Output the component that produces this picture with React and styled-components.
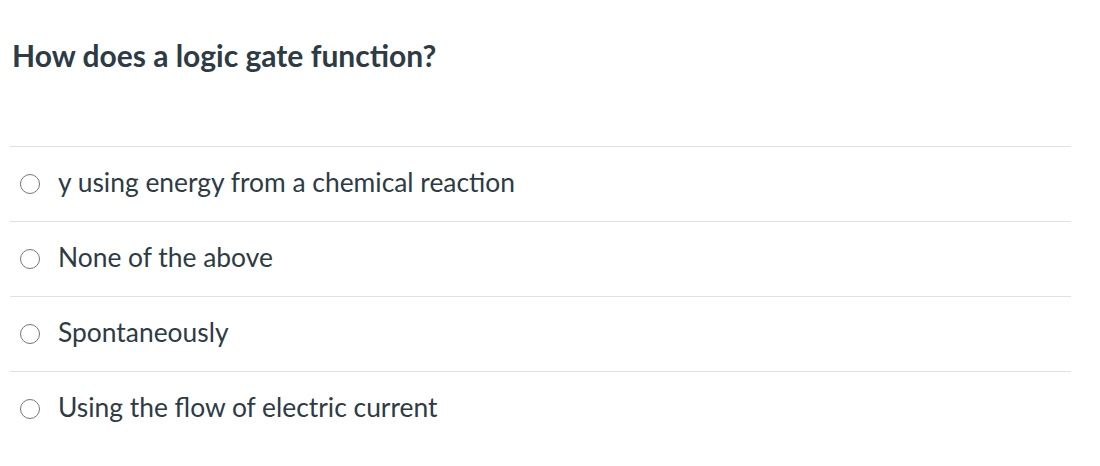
import React from 'react';
import styled, { createGlobalStyle } from 'styled-components';

const GlobalStyle = createGlobalStyle`
  body {
    margin: 0;
    background: #ffffff;
    font-family: Lato, "Open Sans", sans-serif;
  }
`;

const options = [
  'y using energy from a chemical reaction',
  'None of the above',
  'Spontaneously',
  'Using the flow of electric current',
];

export default function App() {
  return (
    <>
      <GlobalStyle />
      <Question>
        <Title>How does a logic gate function?</Title>
        <Answers>
          {options.map((text) => (
            <Answer key={text}>
              <Radio type="radio" name="answer" />
              <AnswerText>{text}</AnswerText>
            </Answer>
          ))}
        </Answers>
      </Question>
    </>
  );
}

const Question = styled.div`
  width: 1061px;
  padding: 36px 0 0 10px;
  color: #2d3b45;
`;
const Title = styled.h2`
  margin: 0 0 0 2px;
  font-size: 30px;
  font-weight: 700;
  line-height: 38px;
`;
const Answers = styled.div`
  margin-top: 72px;
  display: flex;
  flex-direction: column;
`;
const Answer = styled.label`
  display: flex;
  align-items: center;
  box-sizing: content-box;
  height: 70px;
  padding-bottom: 4px;
  border-top: 1px solid #dfe1e3;
`;
const Radio = styled.input`
  appearance: none;
  margin: 4px 18px 0 10px;
  width: 20px;
  height: 20px;
  border: 1.5px solid #707880;
  border-radius: 50%;
  background: #fff;
  box-sizing: border-box;
`;
const AnswerText = styled.span`
  font-size: 26.4px;
  line-height: 32px;
  color: #2d3b45;
`;
